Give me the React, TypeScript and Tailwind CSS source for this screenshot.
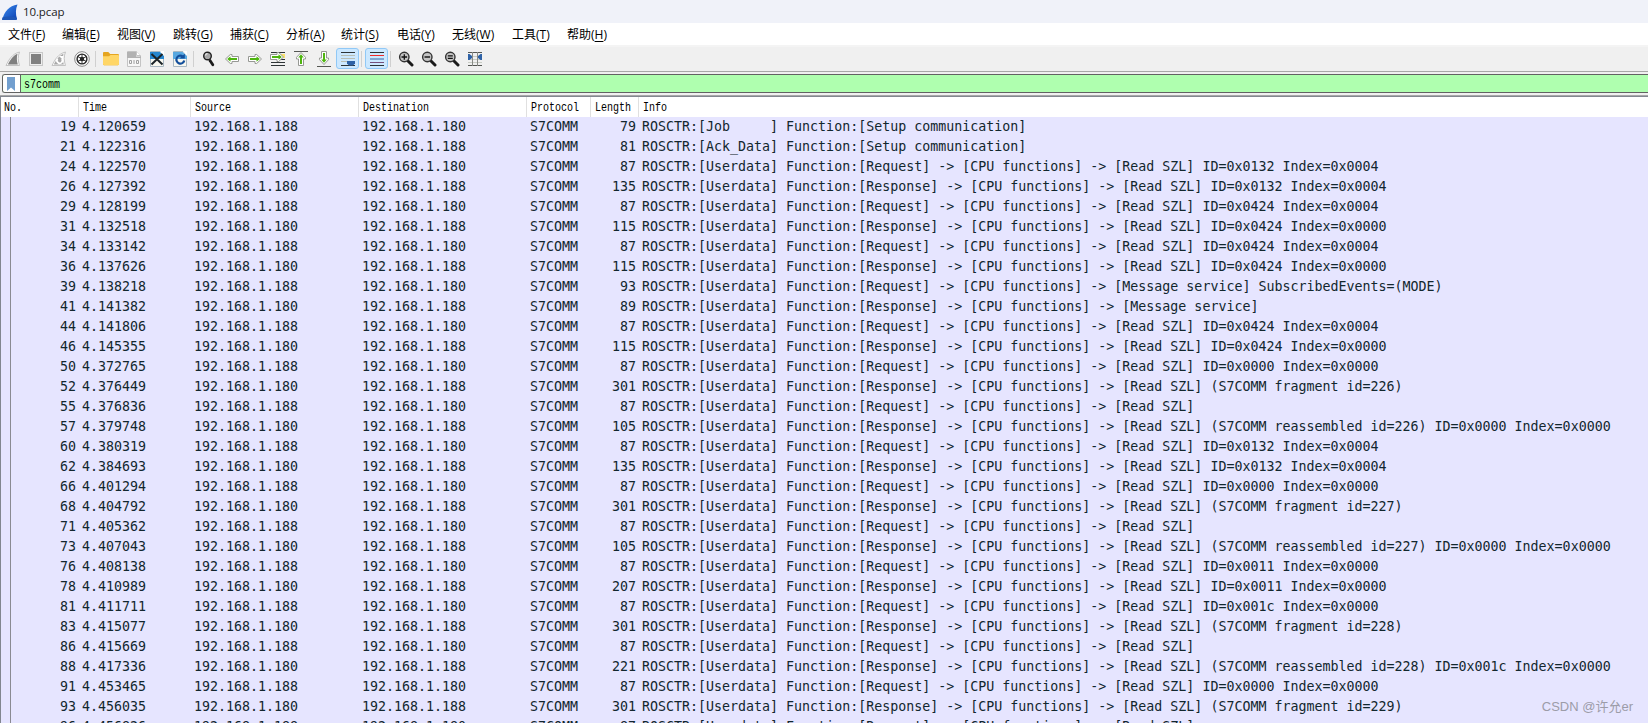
import React from 'react';

const menus = [
  { label: '文件', hotkey: 'F', width: 'w-[54px]' },
  { label: '编辑', hotkey: 'E', width: 'w-[55px]' },
  { label: '视图', hotkey: 'V', width: 'w-[56px]' },
  { label: '跳转', hotkey: 'G', width: 'w-[57px]' },
  { label: '捕获', hotkey: 'C', width: 'w-[56px]' },
  { label: '分析', hotkey: 'A', width: 'w-[55px]' },
  { label: '统计', hotkey: 'S', width: 'w-[56px]' },
  { label: '电话', hotkey: 'Y', width: 'w-[55px]' },
  { label: '无线', hotkey: 'W', width: 'w-[60px]' },
  { label: '工具', hotkey: 'T', width: 'w-[55px]' },
  { label: '帮助', hotkey: 'H', width: 'w-[55px]' },
];

const columns = [
  { label: 'No.', width: 'w-[79px]' },
  { label: 'Time', width: 'w-[112px]' },
  { label: 'Source', width: 'w-[168px]' },
  { label: 'Destination', width: 'w-[168px]' },
  { label: 'Protocol', width: 'w-[64px]' },
  { label: 'Length', width: 'w-[48px]' },
  { label: 'Info', width: 'flex-1' },
];

const PLC = '192.168.1.180';
const HOST = '192.168.1.188';

const REQ = 'ROSCTR:[Userdata] Function:[Request] -> [CPU functions] -> ';
const RES = 'ROSCTR:[Userdata] Function:[Response] -> [CPU functions] -> ';

// no, time, length, info. Packets alternate host -> plc, plc -> host.
const packets: [number, string, number, string][] = [
  [19, '4.120659', 79, 'ROSCTR:[Job     ] Function:[Setup communication]'],
  [21, '4.122316', 81, 'ROSCTR:[Ack_Data] Function:[Setup communication]'],
  [24, '4.122570', 87, REQ + '[Read SZL] ID=0x0132 Index=0x0004'],
  [26, '4.127392', 135, RES + '[Read SZL] ID=0x0132 Index=0x0004'],
  [29, '4.128199', 87, REQ + '[Read SZL] ID=0x0424 Index=0x0004'],
  [31, '4.132518', 115, RES + '[Read SZL] ID=0x0424 Index=0x0000'],
  [34, '4.133142', 87, REQ + '[Read SZL] ID=0x0424 Index=0x0004'],
  [36, '4.137626', 115, RES + '[Read SZL] ID=0x0424 Index=0x0000'],
  [39, '4.138218', 93, REQ + '[Message service] SubscribedEvents=(MODE)'],
  [41, '4.141382', 89, RES + '[Message service]'],
  [44, '4.141806', 87, REQ + '[Read SZL] ID=0x0424 Index=0x0004'],
  [46, '4.145355', 115, RES + '[Read SZL] ID=0x0424 Index=0x0000'],
  [50, '4.372765', 87, REQ + '[Read SZL] ID=0x0000 Index=0x0000'],
  [52, '4.376449', 301, RES + '[Read SZL] (S7COMM fragment id=226)'],
  [55, '4.376836', 87, REQ + '[Read SZL]'],
  [57, '4.379748', 105, RES + '[Read SZL] (S7COMM reassembled id=226) ID=0x0000 Index=0x0000'],
  [60, '4.380319', 87, REQ + '[Read SZL] ID=0x0132 Index=0x0004'],
  [62, '4.384693', 135, RES + '[Read SZL] ID=0x0132 Index=0x0004'],
  [66, '4.401294', 87, REQ + '[Read SZL] ID=0x0000 Index=0x0000'],
  [68, '4.404792', 301, RES + '[Read SZL] (S7COMM fragment id=227)'],
  [71, '4.405362', 87, REQ + '[Read SZL]'],
  [73, '4.407043', 105, RES + '[Read SZL] (S7COMM reassembled id=227) ID=0x0000 Index=0x0000'],
  [76, '4.408138', 87, REQ + '[Read SZL] ID=0x0011 Index=0x0000'],
  [78, '4.410989', 207, RES + '[Read SZL] ID=0x0011 Index=0x0000'],
  [81, '4.411711', 87, REQ + '[Read SZL] ID=0x001c Index=0x0000'],
  [83, '4.415077', 301, RES + '[Read SZL] (S7COMM fragment id=228)'],
  [86, '4.415669', 87, REQ + '[Read SZL]'],
  [88, '4.417336', 221, RES + '[Read SZL] (S7COMM reassembled id=228) ID=0x001c Index=0x0000'],
  [91, '4.453465', 87, REQ + '[Read SZL] ID=0x0000 Index=0x0000'],
  [93, '4.456035', 301, RES + '[Read SZL] (S7COMM fragment id=229)'],
  [96, '4.456826', 87, REQ + '[Read SZL]'],
];

function Tool({ children, active }: { children: React.ReactNode; active?: boolean }) {
  return (
    <div
      className={`h-[21px] w-[23px] shrink-0 rounded-[3px] ${
        active ? 'border border-[#90c8f6] bg-[#cce8ff] pt-[2px] pl-[3px]' : 'pt-[3px] pl-1'
      }`}
    >
      <svg width="16" height="16" viewBox="0 0 16 16" fill="none" className="block">
        {children}
      </svg>
    </div>
  );
}

function Separator() {
  return (
    <div className="flex h-[21px] w-[6px] shrink-0 items-center pl-[2px]">
      <div className="h-4 w-px bg-[#d0d0d0]" />
    </div>
  );
}

function Magnifier({ children }: { children: React.ReactNode }) {
  return (
    <>
      <path d="M10 10l4 4" stroke="#1a1a1a" strokeWidth="3" strokeLinecap="round" />
      <circle cx="6.3" cy="6" r="4.7" fill="#c4c4c4" stroke="#333" strokeWidth="1.4" />
      {children}
    </>
  );
}

function Arrow({ transform }: { transform?: string }) {
  return (
    <g transform={transform}>
      <path
        d="M1.5 5.5h6.500V3.500h1.700L14.500 8l-4.800 4.500H8v-2H1.500z"
        fill="#fff"
        stroke="#979994"
        strokeLinejoin="round"
      />
      <path d="M3 7h6.500V5.200L12.800 8l-3.300 2.800V9H3z" fill="#4fb510" />
    </g>
  );
}

function Toolbar() {
  return (
    <div className="flex h-[25px] shrink-0 items-start border-b border-[#a8a8a8] bg-[#f0f0f0] pt-px pl-px">
      <Tool>
        <path d="M1 14.500C4 8.500 7 3 14.500 1 12.700 5 13 10 14.500 14.500z" fill="#fafafa" stroke="#c3c3c3" />
        <path d="M2.800 13.500C5.500 8.500 8 4.500 12.500 2.700c-1 3.800-.7 7.500.3 10.800z" fill="#808080" />
      </Tool>
      <Tool>
        <rect x="1.500" y="1.500" width="13" height="13" fill="#eee" stroke="#c8c8c8" />
        <rect x="3" y="3" width="10" height="10" fill="#808080" />
      </Tool>
      <Tool>
        <path d="M1 14.500C4 8.500 7 3 14.500 1 12.700 5 13 10 14.500 14.500z" fill="#fafafa" stroke="#c3c3c3" />
        <path d="M2.800 13.500C5.500 8.500 8 4.500 12.500 2.700c-1 3.800-.7 7.500.3 10.800z" fill="#a8a8a8" />
        <path d="M6.600 7.800a2.700 2.700 0 1 0 4.200.1" stroke="#fff" strokeWidth="1.700" />
        <path d="M8 5h4v4z" fill="#fff" />
      </Tool>
      <Tool>
        <circle cx="8" cy="8" r="7.300" fill="#fff" stroke="#858585" />
        <circle cx="8" cy="8" r="5.600" fill="#262626" />
        <circle cx="8" cy="8" r="3.200" stroke="#fff" strokeWidth="2" />
        <path d="M8 3v10M3.700 5.500l8.600 5M12.300 5.500l-8.600 5" stroke="#262626" strokeWidth=".9" />
        <circle cx="8" cy="8" r="2" fill="#262626" />
      </Tool>
      <Separator />
      <Tool>
        <path d="M0 2.300C0 1.500.4 1 1.200 1h4.100l1.900 2h7.400c.9 0 1.400.5 1.400 1.300V13c0 .7-.5 1.200-1.200 1.200H1.200C.4 14.200 0 13.700 0 13z" fill="#e5a520" />
        <path d="M0 5.200h6l1.500-1.200h7.300c.8 0 1.200.4 1.200 1.100V13c0 .8-.5 1.200-1.200 1.200H1.200C.4 14.200 0 13.800 0 13z" fill="#ffd666" />
      </Tool>
      <Tool>
        <path d="M1.500.5h9l4 4v11h-13z" fill="#f7f7f7" stroke="#c4c4c4" />
        <path d="M1 1h9v4.500h5V7H1z" fill="#b2b2b2" />
        <path d="M10.500.5v4h4" fill="#fff" stroke="#c4c4c4" />
        <path d="M3.500 9.500h2v3h-2zM8 9v4M10.500 9.500h2v3h-2z" stroke="#a0a0a0" />
      </Tool>
      <Tool>
        <path d="M1.500.5h13v15h-13z" fill="#f8f8f0" stroke="#a9b8c2" />
        <path d="M1 1h10l4 4v3H1z" fill="#2687d0" />
        <path d="M11 0h4v5z" fill="#fff" />
        <path d="M2.500 3l11 10.500M13.500 3l-11 10.500" stroke="#1c2428" strokeWidth="2" />
      </Tool>
      <Tool>
        <path d="M1.500.5h9.500l3.500 3.500v11.500h-13z" fill="#f8f8f0" stroke="#a9b8c2" />
        <path d="M1 1h9.500l4.500 4v3H1z" fill="#58a8e0" />
        <path d="M11 0h4v5z" fill="#fff" />
        <path d="M10.500 5.200A4 4 0 1 0 12.300 9.600" stroke="#134f9c" strokeWidth="2.200" />
        <path d="M7.500 7.500h5.300V2.800z" fill="#134f9c" />
      </Tool>
      <Separator />
      <Tool>
        <path d="M9 9.500l2.800 4.300" stroke="#1b1b1b" strokeWidth="2.800" strokeLinecap="round" />
        <circle cx="6.500" cy="5" r="3.800" fill="#a9a9a9" stroke="#222" strokeWidth="1.400" />
        <path d="M4.500 4.500a2 2 0 0 1 2-1.800" stroke="#eee" strokeWidth="1.200" />
      </Tool>
      <Tool>
        <Arrow transform="matrix(-1 0 0 1 16 0)" />
      </Tool>
      <Tool>
        <Arrow />
      </Tool>
      <Tool>
        <path d="M1 1.500h14M1 11.500h14M1 14.500h14M10 8.500h5" stroke="#2e3436" />
        <path d="M11 3h4v4h-4z" fill="#fce36a" />
        <Arrow transform="translate(-1 -2)" />
      </Tool>
      <Tool>
        <path d="M1 .5h14" stroke="#555753" />
        <Arrow transform="rotate(-90 8 8)" />
      </Tool>
      <Tool>
        <path d="M1 15.500h14" stroke="#555753" />
        <Arrow transform="rotate(90 8 8) translate(-1 0)" />
      </Tool>
      <div className="ml-px">
        <Tool active>
          <path d="M1 1.500h14M1 14.500h14" stroke="#2e3436" />
          <path d="M1 4.500h14M1 7.500h14M1 10.500h14" stroke="#b9beb3" />
          <path d="M7 10h8v2.500L13 14.500h-4L7 12.500z" fill="#2e62a6" />
        </Tool>
      </div>
      <Separator />
      <Tool active>
        <path d="M1 1.500h14M1 14.500h14" stroke="#2e3436" />
        <path d="M1 4.500h14" stroke="#ef2929" />
        <path d="M1 8h14" stroke="#3465a4" />
        <path d="M1 11.500h14" stroke="#75507b" />
      </Tool>
      <Separator />
      <Tool>
        <Magnifier>
          <path d="M3.500 6h5.600M6.300 3.200v5.600" stroke="#111" strokeWidth="1.300" />
        </Magnifier>
      </Tool>
      <Tool>
        <Magnifier>
          <path d="M3.500 6h5.600" stroke="#111" strokeWidth="1.400" />
        </Magnifier>
      </Tool>
      <Tool>
        <Magnifier>
          <path d="M3.800 4.900h5M3.800 7.300h5" stroke="#111" strokeWidth="1.200" />
        </Magnifier>
      </Tool>
      <Tool>
        <path d="M1 1.500h14M1 14.500h14" stroke="#555753" />
        <path d="M1 5.500h14M1 8.500h14M1 11.500h14" stroke="#c8ccc4" />
        <path d="M5.500 1v14M10.500 1v14" stroke="#888a85" />
        <path d="M1 3h1.500L5 5v2L2.500 9H1zM15 3h-1.500L11 5v2l2.500 2H15z" fill="#2e62a6" />
      </Tool>
    </div>
  );
}

// Small bitmap-like label, 6px per character
function FixedLabel({ children }: { children: React.ReactNode }) {
  return (
    <span className="inline-block scale-y-[1.25] font-['Liberation_Mono',monospace] text-[10px] leading-none text-black">
      {children}
    </span>
  );
}

export default function App() {
  return (
    <div className="relative flex h-[723px] w-[1648px] flex-col overflow-hidden bg-[#f0f0f0]">
      <div className="flex h-[23px] shrink-0 items-center bg-[#f0f2f9] pl-[2px]">
        <svg width="16" height="16" viewBox="0 0 16 16" className="shrink-0">
          <defs>
            <linearGradient id="fin" x1="0" y1="0" x2="1" y2="1">
              <stop offset="0" stopColor="#3b8cf0" />
              <stop offset="1" stopColor="#0a3fb0" />
            </linearGradient>
          </defs>
          <path d="M.5 15C2.500 7.500 7 2 15.500.5 13.500 5 13.500 10 15 15z" fill="url(#fin)" />
          <path d="M.3 13.500c5-1.300 10-1.300 14.500.5V16H0z" fill="#1d55b5" />
        </svg>
        <span className="ml-[5px] pt-px font-['Open_Sans','Noto_Sans',sans-serif] text-[11.500px] leading-none tracking-[-0.1px] text-[#1b1b1b]">
          10.pcap
        </span>
      </div>

      <div className="flex h-[22px] shrink-0 items-center bg-white pt-[2px] pl-2 font-['Open_Sans','Noto_Sans_CJK_SC',sans-serif] text-[12px] leading-none text-black">
        {menus.map((menu) => (
          <div key={menu.hotkey} className={`shrink-0 whitespace-nowrap ${menu.width}`}>
            {menu.label}(<span className="underline underline-offset-2">{menu.hotkey}</span>)
          </div>
        ))}
      </div>

      <div className="h-[2px] shrink-0 bg-[#f4f4f4]" />
      <Toolbar />

      <div className="flex h-[24px] shrink-0 items-center border-b border-[#a8a8a8] pl-[2px]">
        <div className="flex h-[19px] flex-1 items-center rounded-l-[3px] border border-r-0 border-[#626262] bg-[#afffaf]">
          <div className="flex h-full w-[18px] items-center justify-center rounded-l-[2px] border-r border-[#626262] bg-white pr-px">
            <svg width="8" height="14" viewBox="0 0 8 14">
              <path d="M0 0h8v14l-4-3.500L0 14z" fill="#729fcf" />
            </svg>
          </div>
          <div className="flex pt-[2px] pl-[3px]">
            <FixedLabel>s7comm</FixedLabel>
          </div>
        </div>
      </div>

      <div className="flex min-h-0 flex-1 flex-col border-t border-l border-[#828790]">
        <div className="-ml-px flex h-5 shrink-0 bg-white">
          {columns.map((column) => (
            <div
              key={column.label}
              className={`flex shrink-0 items-center border-r border-[#e0e0e0] pt-[2px] pl-1 first:border-l first:border-l-[#828790] first:pl-[3px] last:border-r-0 ${column.width}`}
            >
              <FixedLabel>{column.label}</FixedLabel>
            </div>
          ))}
        </div>

        <div className="min-h-0 flex-1 overflow-hidden bg-[#e6e5ff] pl-[9px]">
          <div className="border-l border-[#8a8a92] font-['DejaVu_Sans_Mono',monospace] text-[13.300px] leading-5 text-[#12272e]">
            {packets.map(([no, time, length, info], i) => (
              <div key={no} className="flex h-5 whitespace-pre">
                <div className="w-[65px] shrink-0 text-right">{no}</div>
                <div className="w-[112px] shrink-0 pl-[6px]">{time}</div>
                <div className="w-[168px] shrink-0 pl-[6px]">{i % 2 === 0 ? HOST : PLC}</div>
                <div className="w-[168px] shrink-0 pl-[6px]">{i % 2 === 0 ? PLC : HOST}</div>
                <div className="w-[64px] shrink-0 pl-[6px]">S7COMM</div>
                <div className="w-[48px] shrink-0 text-right">{length}</div>
                <div className="flex-1 pl-[6px]">{info}</div>
              </div>
            ))}
          </div>
        </div>
      </div>

      <div className="absolute right-[15px] bottom-[6px] font-['Liberation_Sans','Noto_Sans_CJK_SC',sans-serif] text-[13px] leading-5 text-[#9c9ca8]">
        CSDN @许允er
      </div>
    </div>
  );
}
